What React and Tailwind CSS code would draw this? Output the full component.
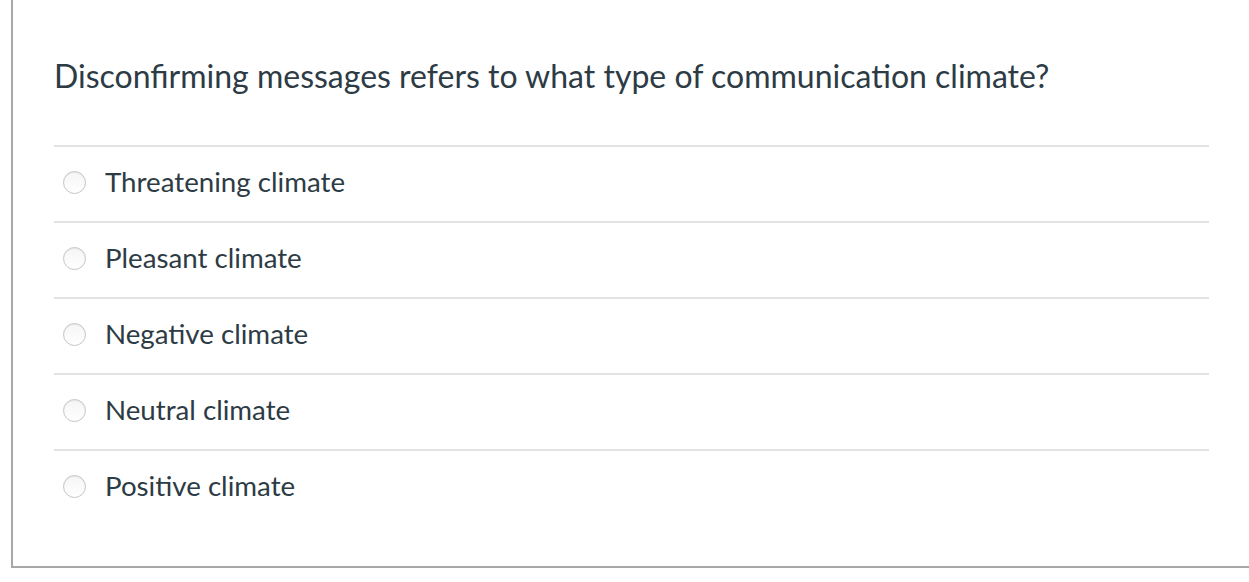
import React from 'react';

const answers = [
    'Threatening climate',
    'Pleasant climate',
    'Negative climate',
    'Neutral climate',
    'Positive climate',
];

export default function App() {
    return (
        <div className="w-[1249px] h-[582px] bg-white overflow-hidden" style={{ fontFamily: 'Lato, "Open Sans", sans-serif' }}>
            <div className="ml-[11px] h-[568px] border-l-2 border-b-2 border-[#a8a8a8] pl-[41px] pr-[40px] text-[#2d3b45]">
                <h1 className="pt-[52px] text-[32px] leading-[48px] font-normal">
                    Disconfirming messages refers to what type of communication climate?
                </h1>
                <div className="mt-[45px]">
                    {answers.map(answer => (
                        <label key={answer} className="flex items-center h-[76px] pb-[4px] border-t-2 border-[#e2e2e2]">
                            <span className="ml-[9px] w-[23px] h-[23px] rounded-full border border-[#c6c6c6] bg-gradient-to-b from-[#f5f5f5] to-white shadow-[inset_0_1px_1px_rgba(0,0,0,0.06)]" />
                            <span className="ml-[19px] text-[27.7px] leading-none">{answer}</span>
                        </label>
                    ))}
                </div>
            </div>
        </div>
    );
}
